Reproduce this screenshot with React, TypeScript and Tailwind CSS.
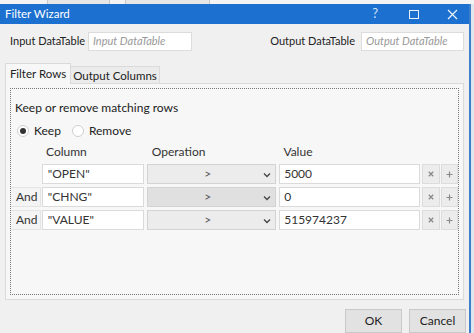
import React from "react";

const font = { fontFamily: 'Lato, "Noto Sans", sans-serif' };

function Chevron() {
  return (
    <svg width="8" height="6" viewBox="0 0 8 6" className="block">
      <path d="M1 1.5 L4 4.5 L7 1.5" fill="none" stroke="#444" strokeWidth="1.3" />
    </svg>
  );
}

function Row({ and, col, val, hover }: { and: boolean; col: string; val: string; hover?: boolean }) {
  return (
    <div className="flex h-[20px] items-stretch">
      <div
        className={
          "w-[30px] flex items-center pl-[5px] text-[#333] " +
          (and ? "border border-[#e4e4e4] border-l-0 bg-[#f4f4f4]" : "")
        }
      >
        {and ? "And" : ""}
      </div>
      <div className="ml-[1px] w-[103px] bg-white border border-[#dadada] flex items-center pl-[5px] text-[#333]">{col}</div>
      <div
        className={
          "ml-[3px] w-[130px] border border-[#d3d3d3] flex items-center relative " +
          (hover ? "bg-[#e0e0e0]" : "bg-[#ececec]")
        }
      >
        <span className="absolute left-[56px] text-[#555]">&gt;</span>
        <span className="absolute right-[4px] top-[7px]">
          <Chevron />
        </span>
      </div>
      <div className="ml-[3px] w-[142px] bg-white border border-[#dadada] flex items-center pl-[4px] text-[#333]">{val}</div>
      <div className="ml-[2px] w-[18px] bg-[#ececec] border border-[#dcdcdc] flex items-center justify-center">
        <svg width="6" height="6" viewBox="0 0 6 6">
          <path d="M0.8 0.8 L5.2 5.2 M5.2 0.8 L0.8 5.2" stroke="#8a8a8a" strokeWidth="1.3" />
        </svg>
      </div>
      <div className="ml-[1px] w-[17px] bg-[#ececec] border border-[#dcdcdc] flex items-center justify-center">
        <svg width="7" height="7" viewBox="0 0 7 7">
          <path d="M3.5 0.5 L3.5 6.5 M0.5 3.5 L6.5 3.5" stroke="#8a8a8a" strokeWidth="1.2" />
        </svg>
      </div>
    </div>
  );
}

export default function App() {
  return (
    <div className="w-[474px] h-[333px] overflow-hidden bg-[#e9e9e9] text-[12px] whitespace-nowrap" style={font}>
      {/* background strip behind dialog */}
      <div className="h-[4px] flex bg-[#f4f4f4]">
        <div className="ml-[47px] w-[63px] border-x border-[#c8c8c8] bg-[#e6e6e6]" />
        <div className="ml-[15px] w-[85px] border-x border-[#c8c8c8] bg-[#e6e6e6]" />
      </div>
      <div className="flex h-[329px]">
        <div className="w-[469px] flex flex-col">
          {/* title bar */}
          <div className="h-[25px] bg-[#1c70cf] flex items-center text-white">
            <span className="ml-[5px] text-[11.5px]">Filter Wizard</span>
            <div className="ml-auto flex items-center">
              <span className="text-[13px] text-[#cfe0f5] mr-[31px]">?</span>
              <span className="w-[10px] h-[9px] border border-[#e8f0fb] mr-[28px]" />
              <svg width="11" height="11" viewBox="0 0 11 11" className="mr-[11px]">
                <path d="M1 1 L10 10 M10 1 L1 10" stroke="#eef4fc" strokeWidth="1.2" />
              </svg>
            </div>
          </div>
          {/* body */}
          <div className="flex-1 bg-[#f0f0f0] flex flex-col">
            <div className="flex items-center mt-[8px] h-[19px]">
              <span className="ml-[10px] w-[73px] text-[11px] text-[#222]">Input DataTable</span>
              <div className="ml-[5px] w-[104px] h-[19px] bg-white border border-[#dcdcdc] flex items-center pl-[4px] italic text-[11px] text-[#999]">
                Input DataTable
              </div>
              <span className="ml-auto text-[11px] text-[#222]">Output DataTable</span>
              <div className="ml-[6px] mr-[5px] w-[103px] h-[19px] bg-white border border-[#dcdcdc] flex items-center pl-[4px] italic text-[11px] text-[#999]">
                Output DataTable
              </div>
            </div>
            {/* tabs */}
            <div className="mt-[12px] ml-[5px] flex items-end h-[21px]">
              <div className="h-[21px] w-[66px] bg-[#f7f7f7] border border-[#dadada] border-b-0 flex items-center justify-center text-[11.5px] text-[#222] relative z-10">
                Filter Rows
              </div>
              <div className="h-[18px] w-[89px] bg-[#ebebeb] border border-[#dadada] border-b-0 border-l-0 flex items-center justify-center text-[11.5px] text-[#222]">
                Output Columns
              </div>
            </div>
            <div className="ml-[5px] mr-[5px] h-[217px] bg-[#f7f7f7] border border-[#dadada] -mt-[1px] p-[4px]">
              <div className="h-full border border-dotted border-[#777] flex flex-col">
                <div className="mt-[10px] ml-[4px] text-[#222]">Keep or remove matching rows</div>
                <div className="mt-[6px] ml-[6px] flex items-center h-[16px]">
                  <span className="w-[12px] h-[12px] rounded-full border border-[#cfcfcf] bg-white flex items-center justify-center">
                    <span className="w-[6px] h-[6px] rounded-full bg-[#333]" />
                  </span>
                  <span className="ml-[5px] text-[#222]">Keep</span>
                  <span className="ml-[11px] w-[12px] h-[12px] rounded-full border border-[#cfcfcf] bg-white" />
                  <span className="ml-[5px] text-[#222]">Remove</span>
                </div>
                <div className="mt-[6px] flex h-[14px] items-center text-[#333]">
                  <span className="ml-[35px]">Column</span>
                  <span className="ml-[65px]">Operation</span>
                  <span className="ml-[78px]">Value</span>
                </div>
                <div className="mt-[5px] flex flex-col gap-[3px]">
                  <Row and={false} col={'"OPEN"'} val="5000" />
                  <Row and col={'"CHNG"'} val="0" hover />
                  <Row and col={'"VALUE"'} val="515974237" />
                </div>
              </div>
            </div>
            {/* footer */}
            <div className="flex justify-end mt-[9px] mr-[3px]">
              <div className="w-[57px] h-[24px] bg-[#e2e2e2] border border-[#c9c9c9] flex items-center justify-center text-[#222]">
                OK
              </div>
              <div className="ml-[7px] w-[57px] h-[24px] bg-[#e2e2e2] border border-[#c9c9c9] flex items-center justify-center text-[#222]">
                Cancel
              </div>
            </div>
          </div>
        </div>
        <div className="w-[2px] bg-[#3d7fc9]" />
        <div className="flex-1 bg-[#dfe6ee]" />
      </div>
    </div>
  );
}
